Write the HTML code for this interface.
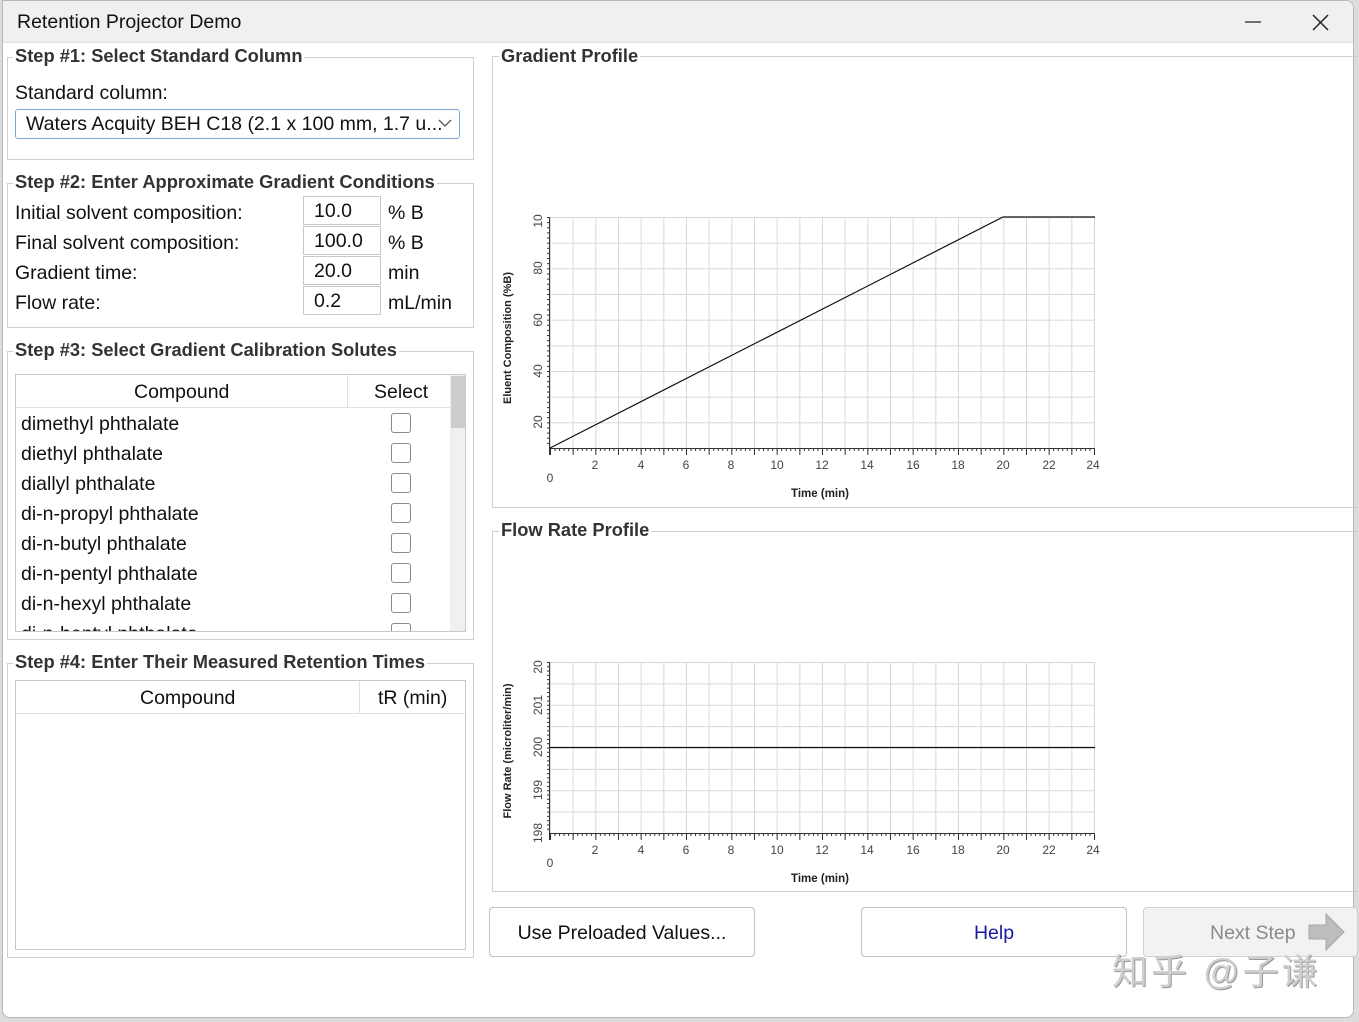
<!DOCTYPE html>
<html><head><meta charset="utf-8">
<style>
*{box-sizing:border-box;margin:0;padding:0}
body{width:1359px;height:1022px;background:#dcdcdc;position:relative;overflow:hidden;font-family:"Liberation Sans","Noto Sans CJK SC",sans-serif;color:#111}
.win{position:absolute;left:2px;top:0;width:1352px;height:1018px;background:#fff;border:1px solid #b8b8b8;border-radius:0 8px 8px 8px;overflow:hidden}
.title{position:absolute;left:0;top:0;width:100%;height:42px;background:#f0f0f0;border-bottom:1px solid #e2e2e2}
.title span{position:absolute;left:14px;top:10px;font-size:19.5px;color:#111}
.abs{position:absolute}
.grp{position:absolute;border:1px solid #cfcfcf}
.gt{position:absolute;background:#fff;font-weight:bold;font-size:18.3px;color:#333;padding:0 2px;white-space:nowrap}
.lbl{position:absolute;font-size:19.5px;white-space:nowrap;margin-top:1px}
.inp{position:absolute;border:1px solid #c8c8c8;height:29px;width:78px;font-size:19.5px;padding:3px 0 0 10px}
.cb{position:absolute;width:20px;height:20px;border:1px solid #8a8a8a;border-radius:3px;background:#fff}
.btn{position:absolute;border:1px solid #c2c2c2;border-radius:4px;background:#fff;font-size:19.5px;text-align:center;line-height:50px}
</style></head><body>
<div class="win">
<div class="title"><span>Retention Projector Demo</span>
<svg class="abs" style="left:1240px;top:12px" width="100" height="20"><line x1="2" y1="9" x2="18" y2="9" stroke="#222" stroke-width="1.3"/><line x1="70" y1="2" x2="85" y2="17" stroke="#222" stroke-width="1.5"/><line x1="85" y1="2" x2="70" y2="17" stroke="#222" stroke-width="1.5"/></svg>
</div>
</div>
<!-- Step 1 -->
<div class="grp" style="left:7px;top:57px;width:467px;height:103px"></div>
<div class="gt" style="left:13px;top:45px">Step #1: Select Standard Column</div>
<div class="lbl" style="left:15px;top:81px">Standard column:</div>
<div class="abs" style="left:15px;top:109px;width:445px;height:30px;border:1px solid #7aa7d8;border-radius:3px;font-size:19.5px;padding:3px 0 0 10px;white-space:nowrap;overflow:hidden">Waters Acquity BEH C18 (2.1 x 100 mm, 1.7 u...
<svg class="abs" style="left:422px;top:9px" width="14" height="10"><path d="M1 1 L7 7 L13 1" fill="none" stroke="#555" stroke-width="1.3"/></svg></div>
<!-- Step 2 -->
<div class="grp" style="left:7px;top:183px;width:467px;height:145px"></div>
<div class="gt" style="left:13px;top:171px">Step #2: Enter Approximate Gradient Conditions</div>
<div class="lbl" style="left:15px;top:201px">Initial solvent composition:</div>
<div class="lbl" style="left:15px;top:231px">Final solvent composition:</div>
<div class="lbl" style="left:15px;top:261px">Gradient time:</div>
<div class="lbl" style="left:15px;top:291px">Flow rate:</div>
<div class="inp" style="left:303px;top:196px">10.0</div>
<div class="inp" style="left:303px;top:226px">100.0</div>
<div class="inp" style="left:303px;top:256px">20.0</div>
<div class="inp" style="left:303px;top:286px">0.2</div>
<div class="lbl" style="left:388px;top:201px">% B</div>
<div class="lbl" style="left:388px;top:231px">% B</div>
<div class="lbl" style="left:388px;top:261px">min</div>
<div class="lbl" style="left:388px;top:291px">mL/min</div>
<!-- Step 3 -->
<div class="grp" style="left:7px;top:351px;width:467px;height:289px"></div>
<div class="gt" style="left:13px;top:339px">Step #3: Select Gradient Calibration Solutes</div>
<div class="abs" style="left:15px;top:374px;width:451px;height:258px;border:1px solid #c8c8c8;overflow:hidden">
 <div class="abs" style="left:0;top:0;width:434px;height:33px;border-bottom:1px solid #e0e0e0"></div>
 <div class="abs" style="left:331px;top:0;width:1px;height:33px;background:#e0e0e0"></div>
 <div class="lbl" style="left:118px;top:5px">Compound</div>
 <div class="lbl" style="left:358px;top:5px">Select</div>
 <div class="abs" style="left:434px;top:0;width:16px;height:258px;background:#f0f0f0"></div>
 <div class="abs" style="left:435px;top:1px;width:14px;height:52px;background:#cdcdcd"></div>
 <div class="lbl" style="left:5px;top:37px">dimethyl phthalate</div>
 <div class="lbl" style="left:5px;top:67px">diethyl phthalate</div>
 <div class="lbl" style="left:5px;top:97px">diallyl phthalate</div>
 <div class="lbl" style="left:5px;top:127px">di-n-propyl phthalate</div>
 <div class="lbl" style="left:5px;top:157px">di-n-butyl phthalate</div>
 <div class="lbl" style="left:5px;top:187px">di-n-pentyl phthalate</div>
 <div class="lbl" style="left:5px;top:217px">di-n-hexyl phthalate</div>
 <div class="lbl" style="left:5px;top:247px">di-n-heptyl phthalate</div>
 <div class="cb" style="left:375px;top:38px"></div>
 <div class="cb" style="left:375px;top:68px"></div>
 <div class="cb" style="left:375px;top:98px"></div>
 <div class="cb" style="left:375px;top:128px"></div>
 <div class="cb" style="left:375px;top:158px"></div>
 <div class="cb" style="left:375px;top:188px"></div>
 <div class="cb" style="left:375px;top:218px"></div>
 <div class="cb" style="left:375px;top:248px"></div>
</div>
<!-- Step 4 -->
<div class="grp" style="left:7px;top:663px;width:467px;height:295px"></div>
<div class="gt" style="left:13px;top:651px">Step #4: Enter Their Measured Retention Times</div>
<div class="abs" style="left:15px;top:680px;width:451px;height:270px;border:1px solid #c8c8c8">
 <div class="abs" style="left:0;top:0;width:449px;height:33px;border-bottom:1px solid #e0e0e0"></div>
 <div class="abs" style="left:343px;top:0;width:1px;height:33px;background:#e0e0e0"></div>
 <div class="lbl" style="left:124px;top:5px">Compound</div>
 <div class="lbl" style="left:362px;top:5px">tR (min)</div>
</div>
<!-- right groups -->
<div class="grp" style="left:492px;top:56px;width:870px;height:452px"></div>
<div class="gt" style="left:499px;top:45px">Gradient Profile</div>
<div class="grp" style="left:492px;top:531px;width:870px;height:361px"></div>
<div class="gt" style="left:499px;top:519px">Flow Rate Profile</div>
<svg class="abs" style="left:0;top:0" width="1359" height="1022" font-family="Liberation Sans, sans-serif">
<defs>
<pattern id="v" x="550" y="0" width="22.667" height="10" patternUnits="userSpaceOnUse"><line x1="0.5" y1="0" x2="0.5" y2="10" stroke="#d8d8d8"/></pattern>
<pattern id="h1" x="0" y="217" width="10" height="25.667" patternUnits="userSpaceOnUse"><line x1="0" y1="0.5" x2="10" y2="0.5" stroke="#d8d8d8"/></pattern>
<pattern id="h2" x="0" y="662" width="10" height="21.375" patternUnits="userSpaceOnUse"><line x1="0" y1="0.5" x2="10" y2="0.5" stroke="#d8d8d8"/></pattern>
<pattern id="tx" x="550" y="0" width="4.533" height="10" patternUnits="userSpaceOnUse"><line x1="0.5" y1="0" x2="0.5" y2="10" stroke="#333"/></pattern>
<pattern id="tx2" x="550" y="0" width="22.667" height="10" patternUnits="userSpaceOnUse"><line x1="0.5" y1="0" x2="0.5" y2="10" stroke="#333"/></pattern>
<pattern id="ty1" x="0" y="217" width="10" height="5.133" patternUnits="userSpaceOnUse"><line x1="0" y1="0.5" x2="10" y2="0.5" stroke="#333"/></pattern>
<pattern id="ty2" x="0" y="662" width="10" height="4.275" patternUnits="userSpaceOnUse"><line x1="0" y1="0.5" x2="10" y2="0.5" stroke="#333"/></pattern>
</defs>
<rect x="550" y="217" width="545" height="231" fill="url(#v)"/>
<rect x="550" y="217" width="545" height="231" fill="url(#h1)"/>
<rect x="550" y="448" width="545" height="3" fill="url(#tx)"/>
<rect x="550" y="448" width="545" height="7" fill="url(#tx2)"/>
<rect x="547" y="217" width="3" height="231" fill="url(#ty1)"/>
<line x1="550" y1="448.5" x2="1095" y2="448.5" stroke="#333"/>
<line x1="549.5" y1="217" x2="549.5" y2="455" stroke="#333"/>
<polyline points="550,448 1003,217 1095,217" fill="none" stroke="#111" stroke-width="1.2"/>
<g font-size="12" fill="#444" text-anchor="middle">
<text x="550" y="482">0</text><text x="595" y="469">2</text><text x="641" y="469">4</text><text x="686" y="469">6</text><text x="731" y="469">8</text><text x="777" y="469">10</text><text x="822" y="469">12</text><text x="867" y="469">14</text><text x="913" y="469">16</text><text x="958" y="469">18</text><text x="1003" y="469">20</text><text x="1049" y="469">22</text><text x="1093" y="469">24</text>
<text transform="translate(542,422) rotate(-90)">20</text><text transform="translate(542,371) rotate(-90)">40</text><text transform="translate(542,320) rotate(-90)">60</text><text transform="translate(542,268) rotate(-90)">80</text><text transform="translate(542,221) rotate(-90)">10</text>
</g>
<text x="820" y="497" font-size="11.5" font-weight="bold" fill="#222" text-anchor="middle">Time (min)</text>
<text transform="translate(511,338) rotate(-90)" font-size="11" font-weight="bold" fill="#222" text-anchor="middle">Eluent Composition (%B)</text>
<rect x="550" y="662" width="545" height="171" fill="url(#v)"/>
<rect x="550" y="662" width="545" height="171" fill="url(#h2)"/>
<rect x="550" y="833" width="545" height="3" fill="url(#tx)"/>
<rect x="550" y="833" width="545" height="7" fill="url(#tx2)"/>
<rect x="547" y="662" width="3" height="171" fill="url(#ty2)"/>
<line x1="550" y1="833.5" x2="1095" y2="833.5" stroke="#333"/>
<line x1="549.5" y1="662" x2="549.5" y2="840" stroke="#333"/>
<line x1="550" y1="747.5" x2="1095" y2="747.5" stroke="#111" stroke-width="1.3"/>
<g font-size="12" fill="#444" text-anchor="middle">
<text x="550" y="867">0</text><text x="595" y="854">2</text><text x="641" y="854">4</text><text x="686" y="854">6</text><text x="731" y="854">8</text><text x="777" y="854">10</text><text x="822" y="854">12</text><text x="867" y="854">14</text><text x="913" y="854">16</text><text x="958" y="854">18</text><text x="1003" y="854">20</text><text x="1049" y="854">22</text><text x="1093" y="854">24</text>
<text transform="translate(542,833) rotate(-90)">198</text><text transform="translate(542,790) rotate(-90)">199</text><text transform="translate(542,747) rotate(-90)">200</text><text transform="translate(542,705) rotate(-90)">201</text><text transform="translate(542,667) rotate(-90)">20</text>
</g>
<text x="820" y="882" font-size="11.5" font-weight="bold" fill="#222" text-anchor="middle">Time (min)</text>
<text transform="translate(511,751) rotate(-90)" font-size="11" font-weight="bold" fill="#222" text-anchor="middle">Flow Rate (microliter/min)</text>
</svg>
<div class="btn" style="left:489px;top:907px;width:266px;height:50px">Use Preloaded Values...</div>
<div class="btn" style="left:861px;top:907px;width:266px;height:50px;color:#1a1aa0">Help</div>
<div class="btn" style="left:1143px;top:907px;width:215px;height:50px;background:#f2f2f2;border-color:#d0d0d0;color:#8a8a8a;text-align:left;padding-left:66px">Next Step</div>
<svg class="abs" style="left:1306px;top:912px" width="42" height="40"><path d="M3 13 H20 V2 L38 20 L20 38 V27 H3 Z" fill="#bdbdbd" stroke="#a8a8a8"/></svg>
<div class="abs" style="left:1112px;top:943px;font-size:36px;color:#cfcfcf;letter-spacing:3px;white-space:nowrap;font-family:'Liberation Sans','Noto Sans CJK SC',sans-serif;text-shadow:1px 1px 0 #999">知乎 @子谦</div>
</body></html>
